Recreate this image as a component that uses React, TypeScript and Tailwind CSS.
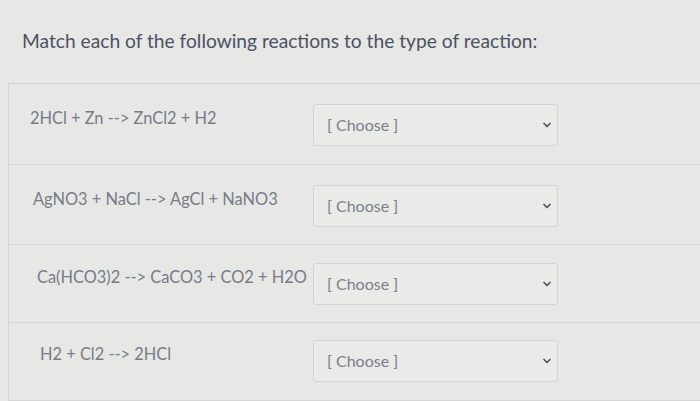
import { ChevronDown } from 'lucide-react'

const rows = [
  { eq: '2HCl + Zn --> ZnCl2 + H2', h: 'h-[81px]', pt: 'pt-[20px]', tx: 'pl-[21px]' },
  { eq: 'AgNO3 + NaCl --> AgCl + NaNO3', h: 'h-[80px]', pt: 'pt-[20px]', tx: 'pl-[24px]' },
  { eq: 'Ca(HCO3)2 --> CaCO3 + CO2 + H2O', h: 'h-[78px]', pt: 'pt-[18px]', tx: 'pl-[28px]' },
  { eq: 'H2 + Cl2 --> 2HCl', h: 'h-[78px]', pt: 'pt-[17px]', tx: 'pl-[31px]' },
]

export default function App() {
  return (
    <div
      className="w-[700px] h-[401px] overflow-hidden bg-[#e7e7e5]"
      style={{ fontFamily: 'Lato, "Open Sans", sans-serif' }}
    >
      {/* Header */}
      <div className="h-[83px] pl-[22px] pt-[29px]">
        <h1 className="text-[19.2px] leading-[24px] text-[#4b5263]">
          Match each of the following reactions to the type of reaction:
        </h1>
      </div>

      {/* Answer rows */}
      <div className="ml-[8px] border-l border-t border-[#d3d3d1]">
        {rows.map((r) => (
          <div key={r.eq} className={`flex ${r.h} ${r.pt} border-b border-[#d6d6d4]`}>
            <div className={`w-[304px] ${r.tx} pt-[4px] text-[16.4px] leading-[20px] text-[#767c88]`}>
              {r.eq}
            </div>
            <div className="w-[245px] h-[42px] flex items-center justify-between pl-[13px] pr-[4px] bg-[#eaeae8] border border-[#d4d4d2] rounded-[3px]">
              <span className="text-[16px] text-[#7a808c]">[ Choose ]</span>
              <ChevronDown className="w-[12px] h-[12px] text-[#4e5666]" strokeWidth={3.5} />
            </div>
          </div>
        ))}
      </div>
    </div>
  )
}
